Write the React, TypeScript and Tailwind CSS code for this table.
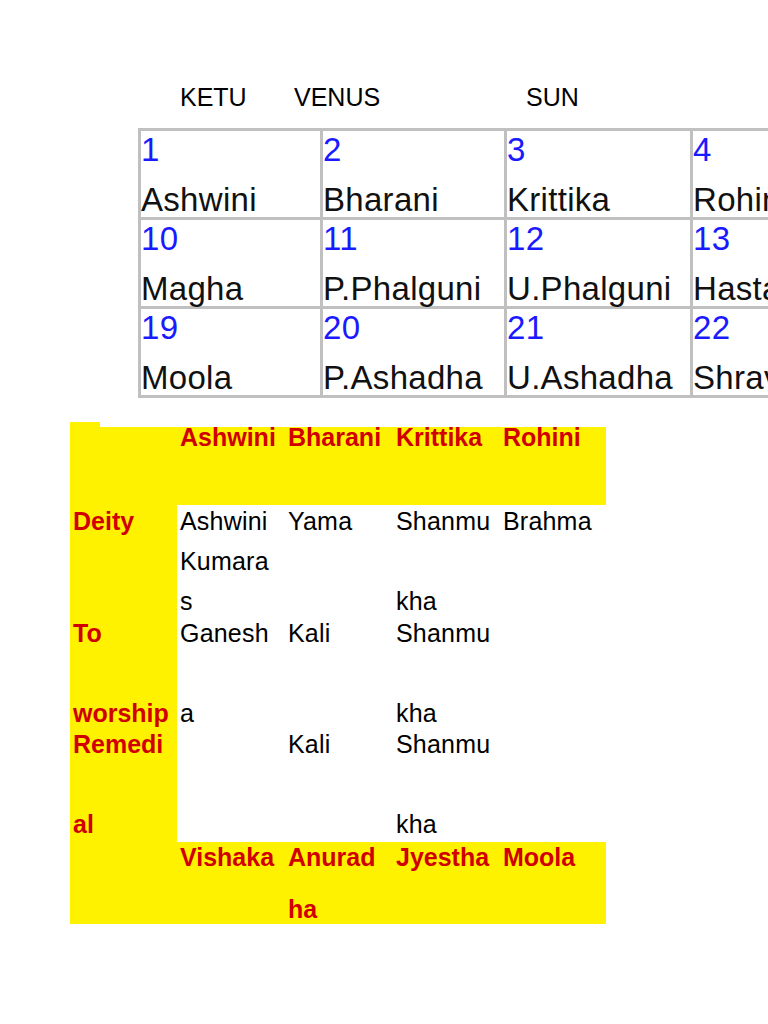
const font = { fontFamily: '"Liberation Sans", Arial, sans-serif' }

const nakshatras = [
  [
    ["1", "Ashwini"],
    ["2", "Bharani"],
    ["3", "Krittika"],
    ["4", "Rohini"],
  ],
  [
    ["10", "Magha"],
    ["11", "P.Phalguni"],
    ["12", "U.Phalguni"],
    ["13", "Hasta"],
  ],
  [
    ["19", "Moola"],
    ["20", "P.Ashadha"],
    ["21", "U.Ashadha"],
    ["22", "Shravana"],
  ],
]

type Row = {
  label: string[]
  cells: string[][]
  height: string
  pad: string
  gap: string
  yellow: boolean
}

const rows: Row[] = [
  {
    label: [""],
    cells: [["Ashwini"], ["Bharani"], ["Krittika"], ["Rohini"]],
    height: "h-[78px]",
    pad: "-mt-[2px]",
    gap: "gap-[27px]",
    yellow: true,
  },
  {
    label: ["Deity"],
    cells: [["Ashwini", "Kumara", "s"], ["Yama"], ["Shanmu", "", "kha"], ["Brahma"]],
    height: "h-[112px]",
    pad: "pt-[4px]",
    gap: "gap-[15px]",
    yellow: false,
  },
  {
    label: ["To", "worship"],
    cells: [["Ganesh", "a"], ["Kali"], ["Shanmu", "kha"], []],
    height: "h-[112px]",
    pad: "pt-[4px]",
    gap: "gap-[55px]",
    yellow: false,
  },
  {
    label: ["Remedi", "al"],
    cells: [[], ["Kali"], ["Shanmu", "kha"], []],
    height: "h-[113px]",
    pad: "pt-[3px]",
    gap: "gap-[55px]",
    yellow: false,
  },
  {
    label: [""],
    cells: [["Vishaka"], ["Anurad", "ha"], ["Jyestha"], ["Moola"]],
    height: "h-[82px]",
    pad: "pt-[3px]",
    gap: "gap-[27px]",
    yellow: true,
  },
]

function Lines({ lines, bold, pad, gap }: { lines: string[]; bold: boolean; pad: string; gap: string }) {
  return (
    <div className={`flex flex-col pl-[3px] ${pad} ${gap}`}>
      {lines.map((l, i) => (
        <div
          key={i}
          className={
            bold
              ? "h-[25px] text-[25px] leading-none font-bold text-[#d00000] whitespace-nowrap"
              : "h-[25px] text-[25px] leading-none tracking-[0.2px] text-black whitespace-nowrap"
          }
        >
          {l}
        </div>
      ))}
    </div>
  )
}

export default function App() {
  return (
    <div className="w-[768px] h-[1024px] overflow-hidden bg-white" style={font}>
      {/* planet labels */}
      <div className="pt-[85px] pl-[180px] flex text-[25px] leading-none text-black">
        <span className="w-[114px]">KETU</span>
        <span className="w-[232px]">VENUS</span>
        <span>SUN</span>
      </div>

      {/* nakshatra grid */}
      <div className="mt-[18px] ml-[138px] w-max grid grid-cols-[179px_181px_183px_183px] grid-rows-[86px_86px_86px] gap-[3px] p-[3px] bg-[#c0c0c0]">
        {nakshatras.flat().map(([num, name]) => (
          <div key={num} className="bg-white flex flex-col justify-between pt-[2px] pb-[1px] text-[33px] leading-none tracking-[0.3px] whitespace-nowrap">
            <div className="text-[#1a1aff]">{num}</div>
            <div className="text-[#111]">{name}</div>
          </div>
        ))}
      </div>

      {/* details table */}
      <div className="mt-[24px] ml-[70px]">
        <div className="w-[30px] h-[5px] bg-[#fff200]" />
        <div className="grid grid-cols-[107px_108px_108px_107px_106px] w-max">
          {rows.map((row, ri) => (
            <div key={ri} className="contents">
              <div className={`${row.height} bg-[#fff200]`}>
                <Lines lines={row.label} bold pad={row.pad} gap={row.gap} />
              </div>
              {row.cells.map((c, ci) => (
                <div key={ci} className={`${row.height} ${row.yellow ? "bg-[#fff200]" : "bg-white"}`}>
                  <Lines lines={c} bold={row.yellow} pad={row.pad} gap={row.gap} />
                </div>
              ))}
            </div>
          ))}
        </div>
      </div>
    </div>
  )
}
